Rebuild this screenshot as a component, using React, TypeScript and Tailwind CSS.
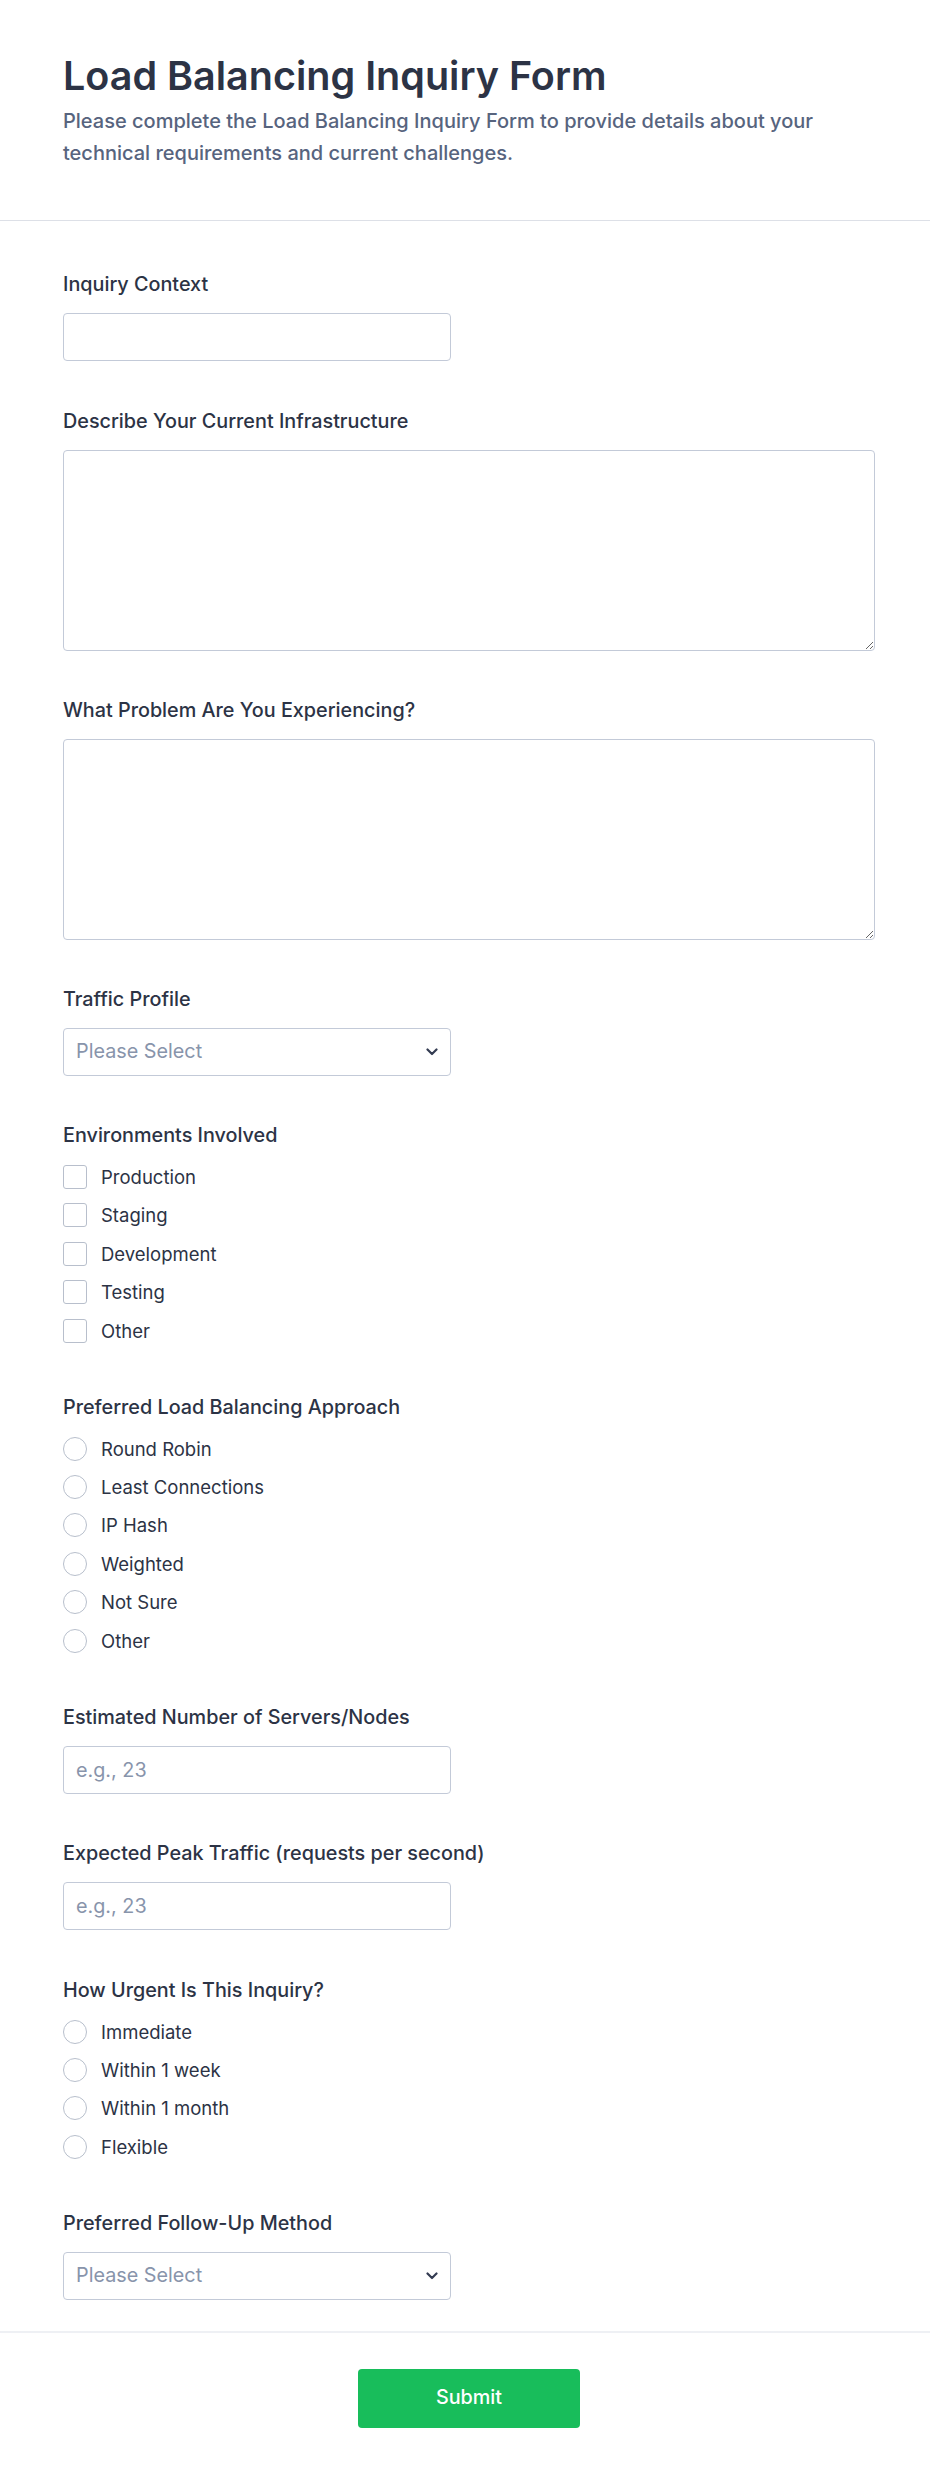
import React from "react";

const FONT = { fontFamily: "Inter, 'Noto Sans', sans-serif" };

function Label({ children, mb = "mb-[17px]" }: { children: React.ReactNode; mb?: string }) {
  return (
    <div className={`text-[19.8px] leading-6 font-medium text-[#2c3345] ${mb}`}>{children}</div>
  );
}

function TextInput({ placeholder }: { placeholder?: string }) {
  return (
    <input
      type="text"
      placeholder={placeholder}
      className="block w-[388px] h-[48px] px-3 border border-[#c3cad8] rounded-[4px] bg-white text-[19.8px] text-[#2c3345] placeholder:text-[#8894ab] outline-none"
    />
  );
}

function TextArea() {
  return (
    <textarea className="block w-full h-[201px] px-3 py-2 border border-[#c3cad8] rounded-[4px] bg-white text-[19.8px] text-[#2c3345] outline-none" />
  );
}

function Select() {
  return (
    <div className="relative w-[388px] h-[48px]">
      <select className="appearance-none block w-full h-full pl-3 pr-10 border border-[#c3cad8] rounded-[4px] bg-white text-[19.8px] text-[#8894ab] outline-none">
        <option>Please Select</option>
      </select>
      <svg
        className="absolute right-[13px] top-1/2 -translate-y-1/2 pointer-events-none"
        width="12"
        height="8"
        viewBox="0 0 12 8"
        fill="none"
      >
        <path d="M1.5 1.5 L6 6 L10.5 1.5" stroke="#343c52" strokeWidth="2.2" strokeLinecap="round" strokeLinejoin="round" />
      </svg>
    </div>
  );
}

function CheckList({ items }: { items: string[] }) {
  return (
    <div className="flex flex-col gap-[14.4px]">
      {items.map((t) => (
        <div key={t} className="flex items-center gap-[14px] h-6">
          <span className="block w-6 h-6 border border-[#b8bfcc] rounded-[3px] bg-white shrink-0" />
          <span className="text-[18.5px] leading-6 text-[#2c3345]">{t}</span>
        </div>
      ))}
    </div>
  );
}

function RadioList({ items }: { items: string[] }) {
  return (
    <div className="flex flex-col gap-[14.4px]">
      {items.map((t) => (
        <div key={t} className="flex items-center gap-[14px] h-6">
          <span className="block w-6 h-6 border border-[#b8bfcc] rounded-full bg-white shrink-0" />
          <span className="text-[18.5px] leading-6 text-[#2c3345]">{t}</span>
        </div>
      ))}
    </div>
  );
}

export default function App() {
  return (
    <div className="w-[930px] min-h-[2478px] bg-white" style={FONT}>
      {/* Header */}
      <div className="pl-[63px] pr-[55px] pt-[53px] pb-[51px] border-b border-[#dde0e7]">
        <h1 className="text-[39.5px] leading-[46px] font-semibold text-[#2c3345]">
          Load Balancing Inquiry Form
        </h1>
        <p className="mt-[6px] text-[20px] leading-[32px] font-medium text-[#57647e]">
          Please complete the Load Balancing Inquiry Form to provide details about your technical requirements and current challenges.
        </p>
      </div>

      {/* Fields */}
      <div className="pl-[63px] pr-[55px] pt-[51px] pb-[31px]">
        <div className="mb-[48px]">
          <Label>Inquiry Context</Label>
          <TextInput />
        </div>

        <div className="mb-[47px]">
          <Label>Describe Your Current Infrastructure</Label>
          <TextArea />
        </div>

        <div className="mb-[47px]">
          <Label>What Problem Are You Experiencing?</Label>
          <TextArea />
        </div>

        <div className="mb-[47px]">
          <Label>Traffic Profile</Label>
          <Select />
        </div>

        <div className="mb-[52px]">
          <Label mb="mb-[18px]">Environments Involved</Label>
          <CheckList items={["Production", "Staging", "Development", "Testing", "Other"]} />
        </div>

        <div className="mb-[52px]">
          <Label mb="mb-[18px]">Preferred Load Balancing Approach</Label>
          <RadioList items={["Round Robin", "Least Connections", "IP Hash", "Weighted", "Not Sure", "Other"]} />
        </div>

        <div className="mb-[47px]">
          <Label>Estimated Number of Servers/Nodes</Label>
          <TextInput placeholder="e.g., 23" />
        </div>

        <div className="mb-[48px]">
          <Label>Expected Peak Traffic (requests per second)</Label>
          <TextInput placeholder="e.g., 23" />
        </div>

        <div className="mb-[52px]">
          <Label mb="mb-[18px]">How Urgent Is This Inquiry?</Label>
          <RadioList items={["Immediate", "Within 1 week", "Within 1 month", "Flexible"]} />
        </div>

        <div>
          <Label>Preferred Follow-Up Method</Label>
          <Select />
        </div>
      </div>

      {/* Footer */}
      <div className="border-t-2 border-[#eef0f4] pl-[63px] pr-[55px] pt-[36px] pb-[50px] flex justify-center">
        <button
          type="button"
          className="w-[222px] h-[59px] rounded-[4px] bg-[#18bd5b] text-white text-[19.8px] font-medium"
        >
          Submit
        </button>
      </div>
    </div>
  );
}
